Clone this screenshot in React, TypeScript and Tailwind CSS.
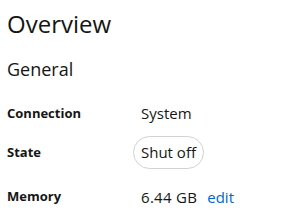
export default function App() {
  return (
    <div className="w-[291px] h-[215px] bg-white text-[#151515] px-[7px] pt-[8px] overflow-hidden" style={{ fontFamily: '"Open Sans", sans-serif' }}>
      <h1 className="text-[24px] leading-[32px]">Overview</h1>
      <h2 className="text-[18px] leading-[24px] mt-[17px]">General</h2>
      <div className="grid grid-cols-[134px_1fr] items-center mt-[14px]">
        <div className="text-[13px] font-bold h-[37px] flex items-center">Connection</div>
        <div className="text-[15px] h-[37px] flex items-center">System</div>
        <div className="text-[13px] font-bold h-[41px] flex items-center">State</div>
        <div className="h-[41px] flex items-center">
          <span className="text-[15px] border border-[#d2d2d2] rounded-full px-[7px] -ml-[8px] h-[33px] flex items-center">Shut off</span>
        </div>
        <div className="text-[13px] font-bold h-[48px] flex items-center">Memory</div>
        <div className="text-[15px] h-[48px] flex items-center gap-[10px]">
          <span className="tracking-[0.3px]">6.44 GB</span>
          <button className="text-[#0066cc]">edit</button>
        </div>
      </div>
    </div>
  )
}
